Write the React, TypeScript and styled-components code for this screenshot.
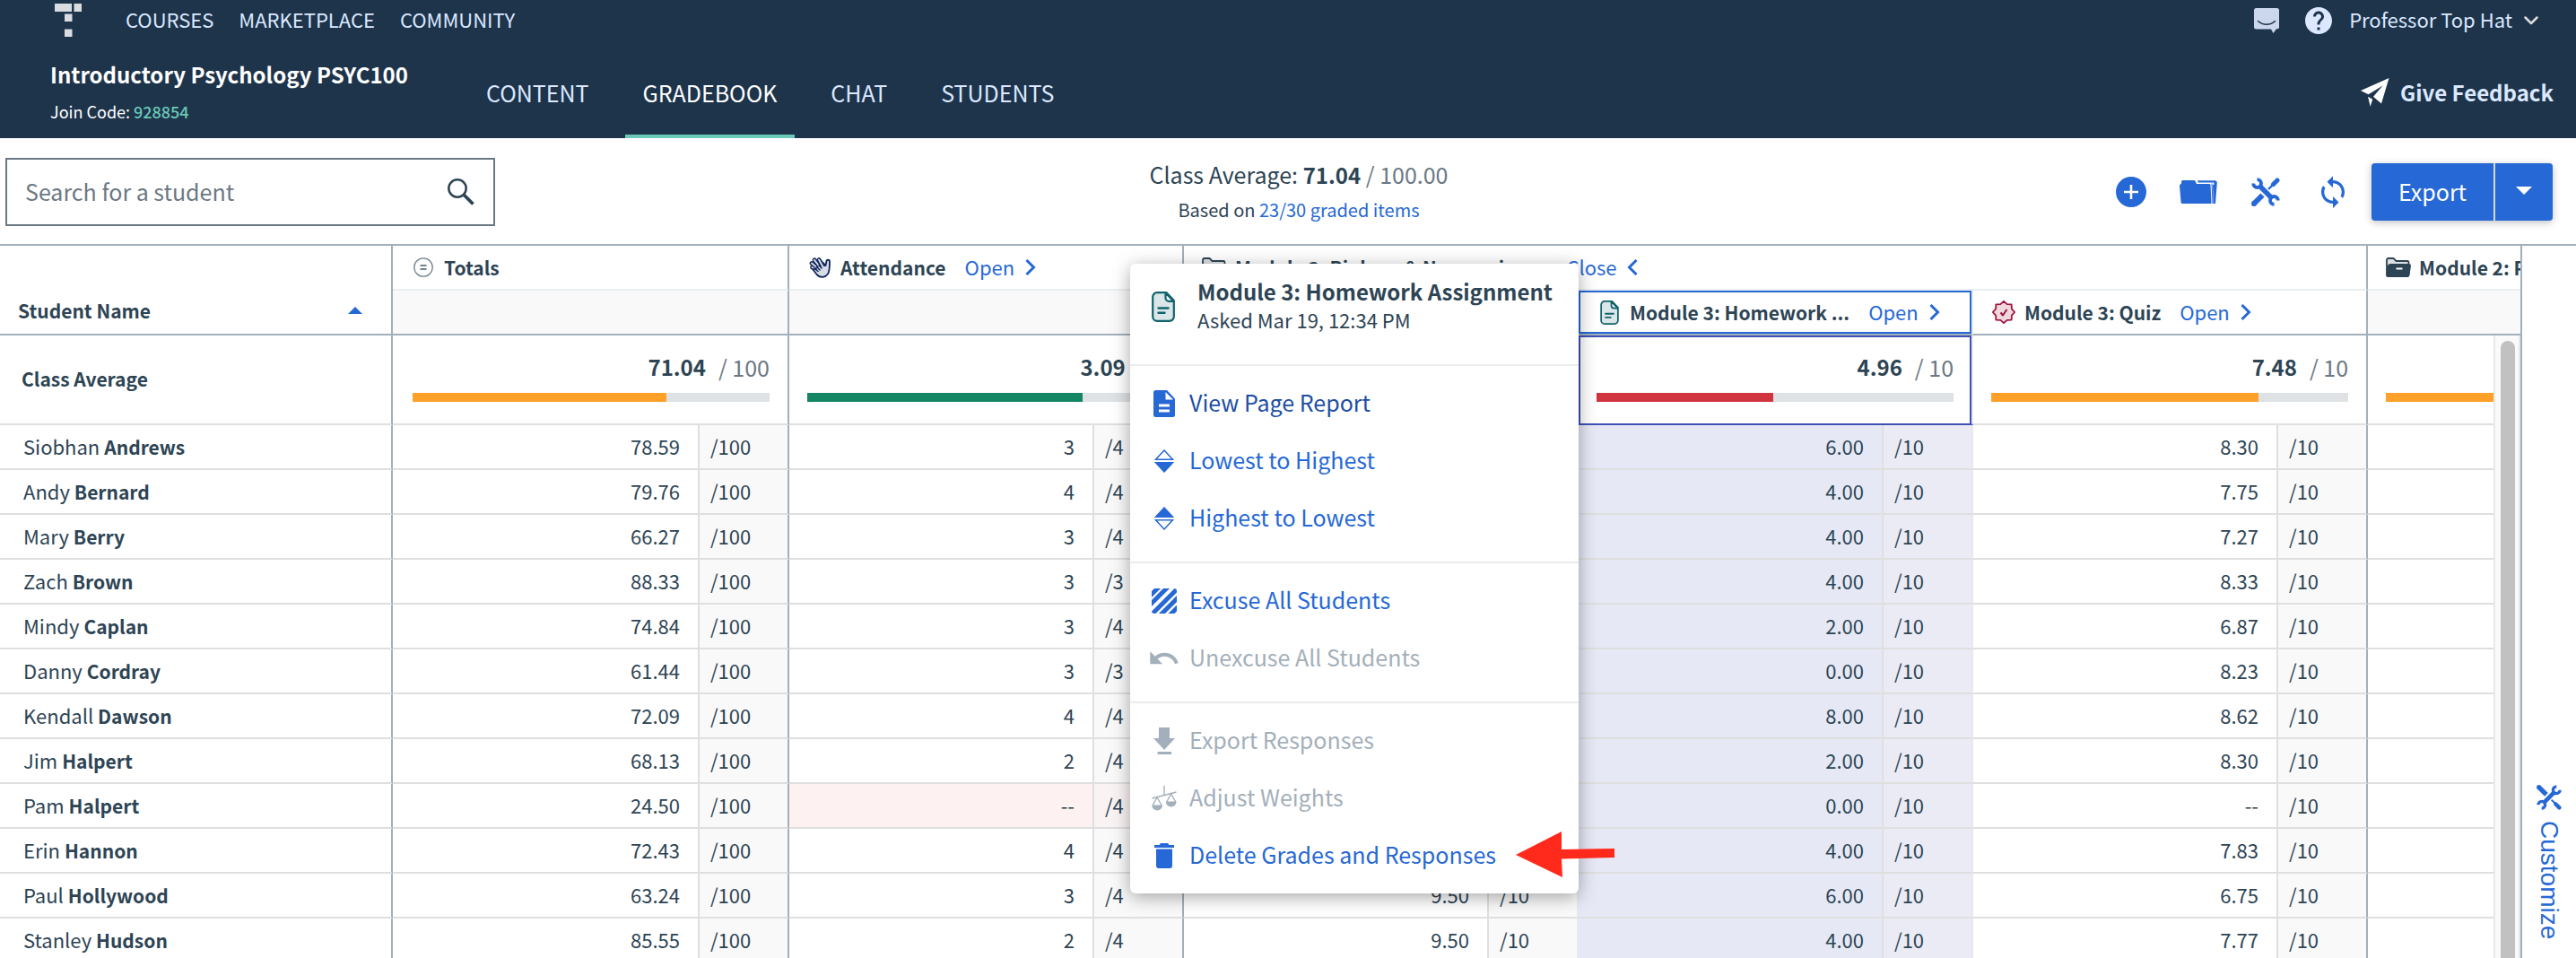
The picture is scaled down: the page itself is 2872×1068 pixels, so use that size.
import React from "react";
import styled, { createGlobalStyle, css } from "styled-components";

const color = {
  navy: "#1e344b",
  ice: "#dbe8ff",
  ink: "#2d4454",
  muted: "#6b7884",
  faint: "#a3afba",
  line: "#dfdfdf",
  soft: "#e9eef1",
  panel: "#f9f9f9",
  blue: "#2668d5",
  darkBlue: "#1d4ea3",
  indigo: "#3f51b5",
  teal: "#6bc9b8",
};

const GlobalStyle = createGlobalStyle`
  *, *::before, *::after { box-sizing: border-box; }
  body {
    margin: 0;
    background: #fff;
    color: ${color.ink};
    font-family: "Noto Sans CJK SC", "Noto Sans", sans-serif;
    font-size: 22px;
    line-height: 32px;
  }
  button, input { font: inherit; color: inherit; }
  button { border: 0; padding: 0; background: none; cursor: pointer; }
  a { color: inherit; text-decoration: none; }
  svg { display: block; flex: none; }
`;

const Page = styled.div`
  display: flex;
  flex-direction: column;
  height: 100vh;
  min-height: 640px;
  overflow: hidden;
`;

/* ---------- header ---------- */

const Header = styled.header`
  background: ${color.navy};
  color: ${color.ice};
`;

const TopBar = styled.div`
  display: flex;
  align-items: center;
  justify-content: space-between;
  height: 46px;
  padding: 0 42px 0 61px;
`;

const TopGroup = styled.div`
  display: flex;
  align-items: center;
`;

const TopNav = styled.nav`
  display: flex;
  gap: 28px;
  margin-left: 49px;
  padding-bottom: 5px;
`;

const HelpLink = styled.a`
  margin: 0 19px 0 29px;
`;

const AccountButton = styled.button`
  display: flex;
  align-items: center;
  gap: 13px;
`;

const AccountName = styled.span`
  padding-bottom: 5px;
`;

const CourseBar = styled.div`
  display: flex;
  align-items: center;
  height: 108px;
  padding: 6px 25px 0 56px;
`;

const Course = styled.div`
  display: flex;
  flex-direction: column;
  gap: 10px;
  width: 466px;
  padding-bottom: 4px;
  color: #fff;
`;

const CourseTitle = styled.h1`
  margin: 0;
  font-size: 24px;
  font-weight: 700;
  line-height: 36px;
`;

const JoinCode = styled.div`
  font-size: 18px;
  line-height: 26px;

  strong {
    color: ${color.teal};
    font-weight: 500;
  }
`;

const Tabs = styled.nav`
  display: flex;
  align-self: stretch;
  gap: 20px;
`;

const Tab = styled.a<{ $active?: boolean }>`
  display: flex;
  align-items: center;
  padding: 4px 20px 0;
  border-bottom: 4px solid ${(p) => (p.$active ? color.teal : "transparent")};
  color: ${(p) => (p.$active ? "#fff" : color.ice)};
  font-size: 25px;
`;

const FeedbackLink = styled.a`
  display: flex;
  align-items: center;
  gap: 12px;
  margin-left: auto;
  font-size: 24px;
  font-weight: 700;
`;

/* ---------- toolbar ---------- */

const Toolbar = styled.div`
  display: flex;
  align-items: center;
  padding: 22px 26px 20px 6px;
`;

const SearchBox = styled.label`
  display: flex;
  align-items: center;
  width: 546px;
  height: 76px;
  padding: 0 21px 0 20px;
  border: 2px solid ${color.muted};

  input {
    flex: 1;
    min-width: 0;
    padding: 0 0 2px;
    border: 0;
    outline: 0;
    background: none;
    font-size: 25px;
    line-height: 36px;
  }

  input::placeholder {
    color: ${color.muted};
    opacity: 1;
  }
`;

const Summary = styled.div`
  display: flex;
  flex: 1;
  flex-direction: column;
  align-items: center;
  gap: 8px;
  padding: 0 0 4px 6px;
`;

const SummaryAverage = styled.div`
  font-size: 25px;
  line-height: 36px;

  strong {
    font-size: 24px;
    font-weight: 700;
    line-height: 24px;
  }
  span { color: ${color.muted}; }
`;

const SummaryBasis = styled.div`
  font-size: 20px;
  line-height: 28px;

  a { color: ${color.blue}; }
`;

const IconButton = styled.button`
  display: flex;
  align-items: center;
  justify-content: center;
  width: 75px;
  height: 64px;
  color: ${color.blue};
`;

const SplitButton = styled.div`
  display: flex;
  gap: 2px;
  margin-left: 6px;
  border-radius: 4px;
  background: #d5d9de;
  box-shadow: 0 2px 8px rgba(0, 0, 0, 0.25);
`;

const PrimaryButton = styled.button<{ $side: "left" | "right" }>`
  display: flex;
  align-items: center;
  justify-content: center;
  width: ${(p) => (p.$side === "left" ? 136 : 64)}px;
  height: 64px;
  padding-bottom: 2px;
  border-radius: ${(p) => (p.$side === "left" ? "4px 0 0 4px" : "0 4px 4px 0")};
  background: ${color.blue};
  color: #fff;
  font-size: 25px;
`;

/* ---------- grade table ---------- */

const Workspace = styled.main`
  display: flex;
  flex: 1;
  min-height: 0;
  border-top: 2px solid ${color.faint};
`;

const GridPane = styled.section`
  position: relative;
  flex: 1;
  min-width: 0;
  border-right: 2px solid ${color.faint};
`;

const GridScroller = styled.div`
  height: 100%;
  overflow: hidden;
`;

const Grid = styled.table`
  width: 3080px;
  table-layout: fixed;
  border-collapse: separate;
  border-spacing: 0;

  th, td {
    height: 50px;
    padding: 0;
    border: 0 solid ${color.line};
    border-bottom-width: 2px;
    text-align: left;
    font-weight: 400;
  }
`;

const Col = styled.col<{ $w: number }>`
  width: ${(p) => p.$w}px;
`;

type Edge = "group" | "cell";
const edge = css<{ $edge?: Edge }>`
  && {
    border-right-width: 2px;
    border-right-color: ${(p) => (p.$edge === "group" ? color.faint : "#e8e9ec")};
  }
`;

const labelText = css`
  font-size: 21px;
  font-weight: 700;
`;

const NameHead = styled.th`
  && {
    height: 100px;
    padding: 50px 32px 4px 20px;
    border-bottom-color: ${color.faint};
  }
  ${edge}
`;

const SortButton = styled.button`
  display: flex;
  align-items: center;
  justify-content: space-between;
  width: 100%;
  color: ${color.ink};
  ${labelText}

  svg { color: ${color.blue}; }
`;

const GroupHead = styled.th`
  && { border-bottom-color: ${color.soft}; }
  ${edge}
`;

const ItemHead = styled.th<{ $blank?: boolean; $selected?: boolean }>`
  && {
    border-bottom-color: ${color.faint};
    background: ${(p) => (p.$blank ? color.panel : "#fff")};
    ${(p) => p.$selected && `box-shadow: inset 0 0 0 2px ${color.blue};`}
  }
  ${edge}
`;

const HeadContent = styled.div`
  display: flex;
  align-items: center;
  padding-left: 20px;
  white-space: nowrap;
`;

const HeadIcon = styled.span`
  display: flex;
  justify-content: center;
  width: 28px;
  margin-right: 9px;
`;

const HeadTitle = styled.span`
  ${labelText}
`;

const ToggleButton = styled.button`
  display: flex;
  align-items: center;
  gap: 12px;
  margin-left: 21px;
  color: ${color.blue};

  span { padding-bottom: 3px; }
`;

const AverageName = styled.th`
  && {
    height: 100px;
    padding: 0 0 2px 24px;
    ${labelText}
  }
  ${edge}
`;

const AverageCell = styled.td<{ $selected?: boolean; $first?: boolean }>`
  && {
    padding: 19px 20px 0 ${(p) => (p.$first ? 22 : 20)}px;
    vertical-align: top;
    ${(p) =>
      p.$selected &&
      `border-bottom-color: ${color.indigo};
       box-shadow: inset 2px 0 ${color.indigo}, inset -2px 0 ${color.indigo}, inset 0 2px ${color.indigo};`}
  }
  ${edge}
`;

const AverageValue = styled.div`
  display: flex;
  justify-content: flex-end;
  gap: 14px;
  min-height: 32px;
  margin-bottom: 13px;
  color: ${color.muted};
  font-size: 25px;
  line-height: 32px;

  strong {
    color: ${color.ink};
    font-size: 24px;
    font-weight: 700;
  }
`;

const Meter = styled.div`
  height: 10px;
  background: #dee2e5;
`;

const MeterFill = styled.div<{ $tone: string }>`
  height: 100%;
  background: ${(p) => p.$tone};
`;

const NameCell = styled.th`
  && { padding: 0 0 3px 26px; }
  ${edge}

  strong {
    ${labelText}
    line-height: 24px;
  }
`;

type Tint = "none" | "selected" | "missing";

const ScoreCell = styled.td<{ $tint: Tint }>`
  && {
    padding: 0 20px 3px 0;
    border-right-width: 2px;
    text-align: right;
    background: ${(p) => ({ none: "#fff", selected: "#e6e9f5", missing: "#fef1f1" })[p.$tint]};
  }
`;

const MaxCell = styled.td<{ $tint: Tint }>`
  && {
    padding: 0 0 3px 12px;
    background: ${(p) => ({ none: color.panel, selected: "#eaebf4", missing: "#faf3f3" })[p.$tint]};
  }
  ${edge}
`;

const EmptyCell = styled.td`
  ${edge}
`;

const ScrollTrack = styled.div`
  position: absolute;
  top: 100px;
  right: 0;
  bottom: 0;
  width: 30px;
  padding: 6px 4px 0 6px;
  border: solid #e8e8e8;
  border-width: 0 2px;
  background: #fafafa;
`;

const ScrollThumb = styled.div`
  width: 16px;
  height: 100%;
  border-radius: 8px 8px 0 0;
  background: #c1c1c1;
`;

const SideRail = styled.aside`
  display: flex;
  flex-direction: column;
  justify-content: flex-end;
  align-items: center;
  width: 60px;
  padding-bottom: 21px;
`;

const CustomizeButton = styled.button`
  display: flex;
  flex-direction: column;
  align-items: center;
  gap: 12px;
  color: ${color.blue};
  font-family: "Liberation Sans", Arial, sans-serif;
  font-size: 28px;
  line-height: 32px;

  span { writing-mode: vertical-rl; }
  svg { transform: rotate(90deg); }
`;

/* ---------- context menu ---------- */

const Menu = styled.div`
  position: absolute;
  top: 20px;
  left: 1260px;
  z-index: 2;
  width: 500px;
  border-radius: 6px;
  background: #fff;
  box-shadow: 0 4px 20px rgba(0, 0, 0, 0.35);
`;

const MenuHeader = styled.div`
  display: flex;
  gap: 25px;
  height: 112px;
  padding: 14px 0 0 24px;

  svg { margin-top: 17px; }
`;

const MenuTitle = styled.div`
  font-size: 24px;
  font-weight: 700;
  line-height: 34px;
  white-space: nowrap;
`;

const MenuSubtitle = styled.div`
  line-height: 28px;
`;

const MenuGroup = styled.div`
  padding: 10px 0 16px;
  border-top: 2px solid #ececec;

  &:last-of-type { padding-bottom: 10px; }
`;

const MenuItem = styled.button<{ $hover?: boolean }>`
  display: flex;
  align-items: center;
  width: 100%;
  height: 64px;
  padding-left: 20px;
  color: ${color.blue};
  font-size: 25px;
  text-align: left;

  span {
    padding: 0 0 4px 10px;
    ${(p) => p.$hover && `color: ${color.darkBlue};`}
  }

  &:disabled { color: ${color.faint}; }
`;

const Pointer = styled.svg`
  position: absolute;
  top: 652px;
  left: 1690px;
  z-index: 3;
`;

/* ---------- icons ---------- */

const Logo = () => (
  <svg width="30" height="38" viewBox="0 0 30 38" fill="#d9dce1">
    <path d="M0 0h19v9H0zM21.500 0H30v9h-8.500zM11 11.500h8.500V20H11zM11 28.500h8.500V37H11z" />
  </svg>
);

const ChatIcon = () => (
  <svg width="28" height="28" viewBox="0 0 28 28">
    <path d="M2.500 0h23A2.500 2.500 0 0 1 28 2.500v19q0 1.500-1.500 1.800H25L21.500 28 19 23.500H2.500A2.500 2.500 0 0 1 0 21v-18.500A2.500 2.500 0 0 1 2.500 0z" fill="#cbd7ec" />
    <path d="M4.500 14.500c5.500 5 13.500 5 19 0" fill="none" stroke={color.navy} strokeWidth="1.500" strokeLinecap="round" />
  </svg>
);

const HelpIcon = () => (
  <svg width="30" height="30" viewBox="2 2 20 20" fill={color.ice}>
    <path d="M12 2C6.480 2 2 6.480 2 12s4.480 10 10 10 10-4.480 10-10S17.520 2 12 2zm1 17h-2v-2h2v2zm2.070-7.750l-.9.920C13.450 12.900 13 13.500 13 15h-2v-.5c0-1.100.45-2.100 1.170-2.830l1.240-1.260c.37-.36.59-.86.59-1.410 0-1.100-.9-2-2-2s-2 .9-2 2H8c0-2.210 1.790-4 4-4s4 1.790 4 4c0 .88-.36 1.680-.93 2.250z" />
  </svg>
);

const ChevronDown = () => (
  <svg width="16" height="10" viewBox="0 0 16 10" fill="none" stroke="#dcdcdc" strokeWidth="2.500" strokeLinecap="round" strokeLinejoin="round">
    <path d="M1.500 1.500L8 8l6.500-6.500" />
  </svg>
);

const PlaneIcon = () => (
  <svg width="32" height="32" viewBox="0 0 32 32" fill="#fff">
    <path d="M31.500 0L0 14l8.500 4.200L24.500 8.500 14 20.800 23 28.500zM8 20.800l5.200 3-2.500 8z" />
  </svg>
);

const SearchIcon = () => (
  <svg width="30" height="30" viewBox="0 0 30 30" fill="none" stroke={color.ink}>
    <circle cx="11" cy="11" r="9.700" strokeWidth="2.500" />
    <path d="M18 18l10.500 10.500" strokeWidth="3.800" />
  </svg>
);

const PlusIcon = () => (
  <svg width="34" height="34" viewBox="0 0 34 34">
    <circle cx="17" cy="17" r="17" fill="currentColor" />
    <path d="M17 9v16M9 17h16" stroke="#fff" strokeWidth="2.600" />
  </svg>
);

const FoldersIcon = () => (
  <svg width="42" height="26" viewBox="0 0 42 26" fill="currentColor">
    <path d="M3.500 0H17l2 4h14.500l1 .8L35.500 26H3q-1.200 0-1.400-1.200L0 6q0-1.500 1.800-2L2.200 1Q2.400 0 3.500 0z" />
    <path d="M20 .3h19q3 .2 2.800 2.500L40 26h-2.200l-.8-21 1.500-.2-.2-2.200H20.800zM35.500 3.500h1L37.500 26h-1z" />
  </svg>
);

const ToolsIcon = ({ size = 32 }: { size?: number }) => (
  <svg width={size} height={size} viewBox="0 0 32 32" fill="none" stroke="currentColor">
    <path d="M9 9l14 14" strokeWidth="5.500" />
    <path d="M6.500 2.200A4.400 4.400 0 1 1 2.200 6.500" strokeWidth="3.800" />
    <path d="M25.500 29.800a4.400 4.400 0 1 1 4.300-4.300" strokeWidth="3.800" />
    <path d="M3 29L12.500 19.500" strokeWidth="6" />
    <path d="M3 29v.01" strokeWidth="6" strokeLinecap="round" />
    <path d="M19 13l5-5" strokeWidth="2.400" />
    <path d="M24.500 7.500L29 3" strokeWidth="5" strokeLinecap="round" />
  </svg>
);

const SyncIcon = () => (
  <svg width="26" height="36" viewBox="4 1 16 22" fill="currentColor">
    <path d="M12 4V1L8 5l4 4V6c3.310 0 6 2.690 6 6 0 1.010-.25 1.970-.7 2.800l1.460 1.460C19.540 15.030 20 13.570 20 12c0-4.420-3.580-8-8-8zm0 14c-3.310 0-6-2.690-6-6 0-1.010.25-1.970.7-2.800L5.240 7.740C4.460 8.970 4 10.430 4 12c0 4.420 3.580 8 8 8v3l4-4-4-4v3z" />
  </svg>
);

const CaretDown = () => (
  <svg width="18" height="10" viewBox="0 0 18 10" fill="#fff">
    <path d="M0 0h18L9 9z" />
  </svg>
);

const CaretUp = () => (
  <svg width="16" height="8" viewBox="0 0 16 8" fill="currentColor">
    <path d="M0 8h16L8 0z" />
  </svg>
);

const Chevron = ({ left }: { left?: boolean }) => (
  <svg width="12" height="18" viewBox="0 0 12 18" fill="none" stroke="currentColor" strokeWidth="3">
    <path d={left ? "M10.500 1L2.500 9l8 8" : "M1.500 1l8 8-8 8"} />
  </svg>
);

const EqualIcon = () => (
  <svg width="22" height="22" viewBox="0 0 22 22" fill="none" stroke="#74848f">
    <circle cx="11" cy="11" r="10.200" strokeWidth="1.300" />
    <path d="M7.500 9h7M7.500 13h7" strokeWidth="1.800" />
  </svg>
);

const HandIcon = () => {
  const fingers = ["M11 13L3.500 12", "M11 14L3 7.500", "M13 13L6 3.800", "M15.500 11.500L11 3.500"];
  return (
    <svg width="24" height="24" viewBox="0 0 24 24" fill="none" strokeLinecap="round" strokeLinejoin="round">
      <path d="M4 14l5 6.500c3.500 3.500 9 3 12-1 2-3 2-7 2-13.500 0-3-3.500-3-3.700 0L18.500 10l-6-6z" fill="#d7dce5" stroke="#10265a" strokeWidth="1.800" />
      {fingers.map((d) => (
        <React.Fragment key={d}>
          <path d={d} stroke="#10265a" strokeWidth="4.800" />
          <path d={d} stroke="#d7dce5" strokeWidth="2" />
        </React.Fragment>
      ))}
      <path d="M10 12l7-1 3 1-1 7-7 1-4-4z" fill="#d7dce5" />
      <path d="M11 9.500l3 3.500M8.500 11.500l3.500 3.500M7 14l3 2.500" stroke="#10265a" strokeWidth="1.500" />
    </svg>
  );
};

const PageIcon = ({ width, height }: { width: number; height: number }) => (
  <svg width={width} height={height} viewBox="0 0 26 34" fill="#dbe6e8" stroke="#11636b" strokeWidth="2.200" strokeLinejoin="round" strokeLinecap="round">
    <path d="M6 1.200h10.500L24.800 10v18a4.800 4.800 0 0 1-4.800 4.800H6A4.800 4.800 0 0 1 1.200 28V6A4.800 4.800 0 0 1 6 1.200z" />
    <path d="M15.500 1.500V7a3.800 3.800 0 0 0 3.800 3.800h5z" fill="#fff" />
    <path d="M7.500 18.500h11M7.500 23.800h7" strokeWidth="2.400" />
  </svg>
);

const sealPoints = Array.from({ length: 16 }, (_, i) => {
  const r = i % 2 ? 9.6 : 12.2;
  const a = (i * Math.PI) / 8;
  return `${13 + r * Math.sin(a)},${13 - r * Math.cos(a)}`;
}).join(" ");

const SealIcon = () => (
  <svg width="26" height="26" viewBox="0 0 26 26" stroke="#a1123c" strokeWidth="1.800" strokeLinejoin="round">
    <polygon points={sealPoints} fill="#efd9df" />
    <path d="M9.500 13.500l2.500 3 4.500-6.500" fill="none" strokeWidth="2" />
  </svg>
);

const FolderIcon = ({ filled }: { filled?: boolean }) => (
  <svg width="28" height="22" viewBox="0 0 28 22" stroke={color.ink} strokeWidth="1.800" strokeLinejoin="round">
    <path d="M1 19V3q0-2 2-2h5.500l3 3H24q1.500 0 1.500 2v13q0 2-2 2H3q-2 0-2-2z" fill="#dde1e4" />
    {filled && <path d="M5 8h20.500q1.800 0 1.500 1.800l-1.400 9.500q-.3 1.700-2 1.700H3q-2 0-1.700-1.800L3 9.500Q3.200 8 5 8z" fill={color.ink} />}
    {filled && <path d="M11.500 12.500h7" stroke="#fff" strokeWidth="2" />}
  </svg>
);

const ReportIcon = () => (
  <svg width="36" height="30" viewBox="0 0 36 30">
    <path d="M8.500 0H21l9 9.500V27.500q0 2.500-2.500 2.500h-19Q6 30 6 27.500v-25Q6 0 8.500 0z" fill="currentColor" />
    <path d="M19.500 2v8.500H28zM12 15.500h12v3H12zM12 21.500h12v3H12z" fill="#fff" />
  </svg>
);

const SortIcon = ({ flip }: { flip?: boolean }) => (
  <svg width="36" height="26" viewBox="0 0 36 26" strokeWidth="1.500" stroke="currentColor">
    <path d="M18 1L8.500 11.200h19z" fill={flip ? "currentColor" : "#fff"} />
    <path d="M18 25L8.500 14.800h19z" fill={flip ? "#fff" : "currentColor"} />
  </svg>
);

const StripesIcon = () => (
  <svg width="36" height="28" viewBox="0 0 36 28">
    <clipPath id="stripe-tile">
      <rect x="4" y="0" width="28" height="28" rx="3" />
    </clipPath>
    <g clipPath="url(#stripe-tile)" stroke="currentColor" strokeWidth="5">
      <path d="M0 10.500L14.500 -4M0 20.500L24.500 -4M2 31L35 -2M10 33.500L36 7.500M20 34L38 16" />
    </g>
  </svg>
);

const UndoIcon = () => (
  <svg width="36" height="16" viewBox="0.500 7.500 23.500 9" fill="currentColor">
    <path d="M12.500 8c-2.650 0-5.050.99-6.900 2.600L2 7v9h9l-3.620-3.620c1.390-1.160 3.160-1.880 5.120-1.880 3.540 0 6.550 2.310 7.600 5.500l2.370-.78C21.080 11.030 17.150 8 12.500 8z" />
  </svg>
);

const DownloadIcon = () => (
  <svg width="36" height="30" viewBox="0 0 36 30" fill="currentColor">
    <path d="M12 0h12v12h6L18 25 6 12h6zM10.500 27h15.500v3H10.500z" />
  </svg>
);

const ScaleIcon = () => (
  <svg width="36" height="28" viewBox="0 0 36 28" fill="none" stroke="currentColor" strokeWidth="1.400">
    <path d="M18 0v10.500M4.500 14L31.500 7" />
    <path d="M10 13L5 22M10 13l5.200 9M25.700 9l-5 9M25.700 9l5 9" />
    <path d="M4.300 21.500h11.800a5.900 5.900 0 0 1-11.800 0zM19.800 17.500h11.800a5.900 5.900 0 0 1-11.800 0z" fill="currentColor" stroke="none" />
  </svg>
);

const TrashIcon = () => (
  <svg width="36" height="28" viewBox="0 0 36 28" fill="currentColor">
    <path d="M7 2h5.500L14 0h8l1.500 2H29v3H7zM9 6.500h18V25q0 3-3 3H12q-3 0-3-3z" />
  </svg>
);

/* ---------- data ---------- */

type Student = [first: string, last: string, total: string, attendance: string, attendanceMax: string, hidden: string, homework: string, quiz: string];

const students: Student[] = [
  ["Siobhan", "Andrews", "78.59", "3", "4", "", "6.00", "8.30"],
  ["Andy", "Bernard", "79.76", "4", "4", "", "4.00", "7.75"],
  ["Mary", "Berry", "66.27", "3", "4", "", "4.00", "7.27"],
  ["Zach", "Brown", "88.33", "3", "3", "", "4.00", "8.33"],
  ["Mindy", "Caplan", "74.84", "3", "4", "", "2.00", "6.87"],
  ["Danny", "Cordray", "61.44", "3", "3", "", "0.00", "8.23"],
  ["Kendall", "Dawson", "72.09", "4", "4", "", "8.00", "8.62"],
  ["Jim", "Halpert", "68.13", "2", "4", "", "2.00", "8.30"],
  ["Pam", "Halpert", "24.50", "--", "4", "", "0.00", "--"],
  ["Erin", "Hannon", "72.43", "4", "4", "", "4.00", "7.83"],
  ["Paul", "Hollywood", "63.24", "3", "4", "9.50", "6.00", "6.75"],
  ["Stanley", "Hudson", "85.55", "2", "4", "9.50", "4.00", "7.77"],
];

const amber = "#ffa028";

/* ---------- composed parts ---------- */

function Head({ icon, title, action }: { icon: React.ReactNode; title: string; action?: "Open" | "Close" }) {
  return (
    <HeadContent>
      <HeadIcon>{icon}</HeadIcon>
      <HeadTitle>{title}</HeadTitle>
      {action && (
        <ToggleButton type="button">
          <span>{action}</span>
          <Chevron left={action === "Close"} />
        </ToggleButton>
      )}
    </HeadContent>
  );
}

interface AverageProps {
  value: string;
  max: string;
  percent: number;
  tone: string;
  group?: boolean;
  selected?: boolean;
  first?: boolean;
}

function Average({ value, max, percent, tone, group, selected, first }: AverageProps) {
  return (
    <AverageCell colSpan={2} $edge={group ? "group" : "cell"} $selected={selected} $first={first}>
      <AverageValue>
        <strong>{value}</strong>
        {max && <span>/ {max}</span>}
      </AverageValue>
      <Meter>
        <MeterFill $tone={tone} style={{ width: `${percent}%` }} />
      </Meter>
    </AverageCell>
  );
}

function Score({ value, max, tint = "none", group }: { value: string; max: string; tint?: Tint; group?: boolean }) {
  return (
    <>
      <ScoreCell $tint={tint}>{value}</ScoreCell>
      <MaxCell $tint={tint} $edge={group ? "group" : "cell"}>
        {value && `/${max}`}
      </MaxCell>
    </>
  );
}

function GradeTable() {
  return (
    <Grid>
      <colgroup>
        <Col $w={438} />
        <Col $w={342} />
        <Col $w={100} />
        {[0, 1, 2, 3, 4].map((i) => (
          <React.Fragment key={i}>
            <Col $w={340} />
            <Col $w={100} />
          </React.Fragment>
        ))}
      </colgroup>
      <thead>
        <tr>
          <NameHead rowSpan={2} scope="col" $edge="group">
            <SortButton type="button">
              Student Name
              <CaretUp />
            </SortButton>
          </NameHead>
          <GroupHead colSpan={2} scope="col" $edge="group">
            <Head icon={<EqualIcon />} title="Totals" />
          </GroupHead>
          <GroupHead colSpan={2} scope="col" $edge="group">
            <Head icon={<HandIcon />} title="Attendance" action="Open" />
          </GroupHead>
          <GroupHead colSpan={6} scope="colgroup" $edge="group">
            <Head icon={<FolderIcon />} title="Module 3: Biology & Neuroscience" action="Close" />
          </GroupHead>
          <GroupHead colSpan={2} scope="col" $edge="group">
            <Head icon={<FolderIcon filled />} title="Module 2: Psychology" />
          </GroupHead>
        </tr>
        <tr>
          <ItemHead colSpan={2} $edge="group" $blank />
          <ItemHead colSpan={2} $edge="group" $blank />
          <ItemHead colSpan={2} $edge="cell" />
          <ItemHead colSpan={2} scope="col" $edge="cell" $selected>
            <Head icon={<PageIcon width={21} height={27} />} title="Module 3: Homework ..." action="Open" />
          </ItemHead>
          <ItemHead colSpan={2} scope="col" $edge="group">
            <Head icon={<SealIcon />} title="Module 3: Quiz" action="Open" />
          </ItemHead>
          <ItemHead colSpan={2} $edge="group" $blank />
        </tr>
      </thead>
      <tbody>
        <tr>
          <AverageName scope="row" $edge="group">Class Average</AverageName>
          <Average value="71.04" max="100" percent={71} tone={amber} group first />
          <Average value="3.09" max="4" percent={77.25} tone="#148663" group />
          <AverageCell colSpan={2} $edge="cell" />
          <Average value="4.96" max="10" percent={49.6} tone="#d0343e" selected />
          <Average value="7.48" max="10" percent={74.8} tone={amber} group />
          <Average value="" max="" percent={71} tone={amber} group />
        </tr>
        {students.map(([first, last, total, attendance, attendanceMax, hidden, homework, quiz]) => (
          <tr key={first + last}>
            <NameCell scope="row" $edge="group">
              {first} <strong>{last}</strong>
            </NameCell>
            <Score value={total} max="100" group />
            <Score value={attendance} max={attendanceMax} tint={attendance === "--" ? "missing" : "none"} group />
            <Score value={hidden} max="10" />
            <Score value={homework} max="10" tint="selected" />
            <Score value={quiz} max="10" group />
            <EmptyCell colSpan={2} $edge="group" />
          </tr>
        ))}
      </tbody>
    </Grid>
  );
}

function ItemMenu() {
  return (
    <Menu role="menu">
      <MenuHeader>
        <PageIcon width={26} height={34} />
        <div>
          <MenuTitle>Module 3: Homework Assignment</MenuTitle>
          <MenuSubtitle>Asked Mar 19, 12:34 PM</MenuSubtitle>
        </div>
      </MenuHeader>
      <MenuGroup>
        <MenuItem role="menuitem" $hover><ReportIcon /><span>View Page Report</span></MenuItem>
        <MenuItem role="menuitem"><SortIcon /><span>Lowest to Highest</span></MenuItem>
        <MenuItem role="menuitem"><SortIcon flip /><span>Highest to Lowest</span></MenuItem>
      </MenuGroup>
      <MenuGroup>
        <MenuItem role="menuitem"><StripesIcon /><span>Excuse All Students</span></MenuItem>
        <MenuItem role="menuitem" disabled><UndoIcon /><span>Unexcuse All Students</span></MenuItem>
      </MenuGroup>
      <MenuGroup>
        <MenuItem role="menuitem" disabled><DownloadIcon /><span>Export Responses</span></MenuItem>
        <MenuItem role="menuitem" disabled><ScaleIcon /><span>Adjust Weights</span></MenuItem>
        <MenuItem role="menuitem"><TrashIcon /><span>Delete Grades and Responses</span></MenuItem>
      </MenuGroup>
    </Menu>
  );
}

export default function App() {
  return (
    <Page>
      <GlobalStyle />
      <Header>
        <TopBar>
          <TopGroup>
            <Logo />
            <TopNav>
              <a href="#courses">COURSES</a>
              <a href="#marketplace">MARKETPLACE</a>
              <a href="#community">COMMUNITY</a>
            </TopNav>
          </TopGroup>
          <TopGroup>
            <button type="button" aria-label="Messages"><ChatIcon /></button>
            <HelpLink href="#help" aria-label="Help"><HelpIcon /></HelpLink>
            <AccountButton type="button">
              <AccountName>Professor Top Hat</AccountName>
              <ChevronDown />
            </AccountButton>
          </TopGroup>
        </TopBar>
        <CourseBar>
          <Course>
            <CourseTitle>Introductory Psychology PSYC100</CourseTitle>
            <JoinCode>Join Code: <strong>928854</strong></JoinCode>
          </Course>
          <Tabs>
            <Tab href="#content">CONTENT</Tab>
            <Tab href="#gradebook" $active aria-current="page">GRADEBOOK</Tab>
            <Tab href="#chat">CHAT</Tab>
            <Tab href="#students">STUDENTS</Tab>
          </Tabs>
          <FeedbackLink href="#feedback"><PlaneIcon />Give Feedback</FeedbackLink>
        </CourseBar>
      </Header>

      <Toolbar>
        <SearchBox>
          <input type="text" placeholder="Search for a student" aria-label="Search for a student" />
          <SearchIcon />
        </SearchBox>
        <Summary>
          <SummaryAverage>Class Average: <strong>71.04</strong> <span>/ 100.00</span></SummaryAverage>
          <SummaryBasis>Based on <a href="#graded">23/30 graded items</a></SummaryBasis>
        </Summary>
        <IconButton type="button" aria-label="Add"><PlusIcon /></IconButton>
        <IconButton type="button" aria-label="Folders"><FoldersIcon /></IconButton>
        <IconButton type="button" aria-label="Settings"><ToolsIcon /></IconButton>
        <IconButton type="button" aria-label="Sync"><SyncIcon /></IconButton>
        <SplitButton>
          <PrimaryButton type="button" $side="left">Export</PrimaryButton>
          <PrimaryButton type="button" $side="right" aria-label="More export options"><CaretDown /></PrimaryButton>
        </SplitButton>
      </Toolbar>

      <Workspace>
        <GridPane>
          <GridScroller>
            <GradeTable />
          </GridScroller>
          <ScrollTrack><ScrollThumb /></ScrollTrack>
          <ItemMenu />
          <Pointer width="112" height="54" viewBox="0 0 112 54" fill="#ff2a1c">
            <path d="M0 27L51 1v20l59-1v10l-59 1.500L52 52z" />
          </Pointer>
        </GridPane>
        <SideRail>
          <CustomizeButton type="button"><ToolsIcon size={28} /><span>Customize</span></CustomizeButton>
        </SideRail>
      </Workspace>
    </Page>
  );
}
